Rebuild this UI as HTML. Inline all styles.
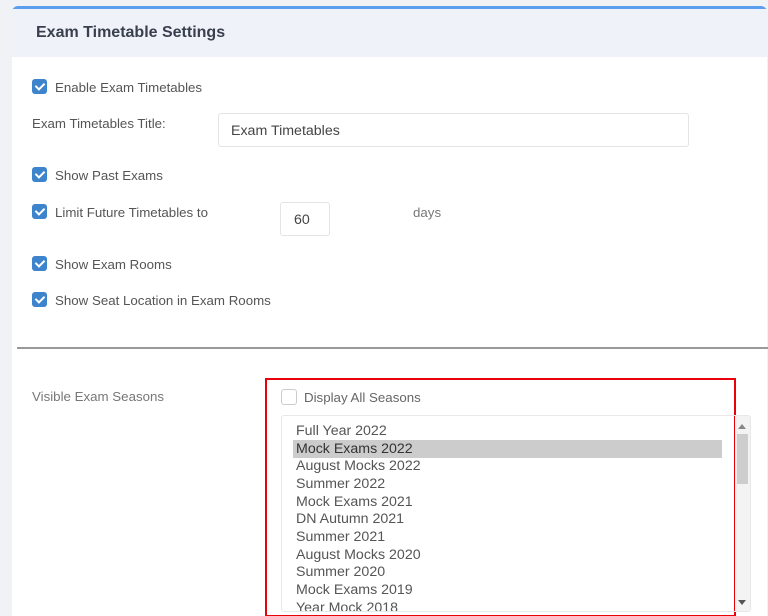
<!DOCTYPE html>
<html style="overflow:hidden"><head><style>
html,body{margin:0;width:768px;height:616px;overflow:hidden}
body{background:#f0f2f6;font-family:"Liberation Sans",sans-serif;position:relative}
.card{position:absolute;left:12px;top:6px;width:755px;height:607px;background:#fff;border-top:3px solid #5b9ef0;border-radius:6px 6px 0 0}
.hdr{position:absolute;left:12px;top:9px;width:755px;height:48px;background:#eff2f8}
.hdr span{position:absolute;left:24px;top:15px;font-size:16px;font-weight:bold;color:#3a3f4e}
.a{position:absolute;font-size:13.3px;color:#555}
.cb{position:absolute;width:15px;height:15px;border-radius:3px;background:#3d84cc}
.cb:after{content:"";position:absolute;left:4.5px;top:2px;width:4px;height:7px;border:solid #fff;border-width:0 2px 2px 0;transform:rotate(45deg)}
.inp{position:absolute;border:1px solid #e4e4e4;border-radius:3px;background:#fff;font-size:14.2px;color:#444}
.list{position:absolute;left:281px;top:415px;width:468px;height:195px;border:1px solid #e8e8e8;border-radius:3px;overflow:hidden}
.it{position:absolute;left:14px;font-size:14.2px;color:#555;line-height:17px}
</style></head><body>
<div class="card"></div>
<div class="hdr"><span>Exam Timetable Settings</span></div>
<div class="cb" style="left:32px;top:79px"></div><div class="a" style="left:55px;top:80px">Enable Exam Timetables</div>
<div class="a" style="left:32px;top:116px">Exam Timetables Title:</div>
<div class="inp" style="left:218px;top:113px;width:469px;height:32px"><span style="position:absolute;left:12px;top:9px">Exam Timetables</span></div>
<div class="cb" style="left:32px;top:167px"></div><div class="a" style="left:55px;top:168px">Show Past Exams</div>
<div class="cb" style="left:32px;top:204px"></div><div class="a" style="left:55px;top:205px">Limit Future Timetables to</div>
<div class="inp" style="left:280px;top:202px;width:48px;height:32px"><span style="position:absolute;left:13px;top:9px">60</span></div>
<div class="a" style="left:413px;top:205px;color:#777">days</div>
<div class="cb" style="left:32px;top:256px"></div><div class="a" style="left:55px;top:257px">Show Exam Rooms</div>
<div class="cb" style="left:32px;top:292px"></div><div class="a" style="left:55px;top:293px">Show Seat Location in Exam Rooms</div>
<div style="position:absolute;left:17px;top:347px;width:751px;height:2px;background:#999"></div>
<div class="a" style="left:32px;top:389px;color:#777">Visible Exam Seasons</div>
<div style="position:absolute;left:265px;top:378px;width:467px;height:235px;border:2px solid #e8000a"></div>
<div style="position:absolute;left:281px;top:389px;width:14px;height:14px;border:1px solid #ccc;border-radius:3px"></div>
<div class="a" style="left:304px;top:390px;color:#666">Display All Seasons</div>
<div class="list">
<div style="position:absolute;left:11px;top:24px;width:429px;height:18px;background:#cccccc"></div>
<div style="position:absolute;right:0;top:0;width:15px;height:195px;background:#f3f3f3"></div>
<div style="position:absolute;right:2px;top:18px;width:11px;height:50px;background:#cdcdcd"></div>
<div style="position:absolute;right:4px;top:8px;border:4px solid transparent;border-bottom:5px solid #888;border-top:0"></div>
<div style="position:absolute;right:4px;bottom:6px;border:4px solid transparent;border-top:5px solid #555;border-bottom:0"></div>
<div class="it" style="top:7px">Full Year 2022</div>
<div class="it" style="top:24.6px;color:#333">Mock Exams 2022</div>
<div class="it" style="top:42.3px">August Mocks 2022</div>
<div class="it" style="top:60px">Summer 2022</div>
<div class="it" style="top:77.6px">Mock Exams 2021</div>
<div class="it" style="top:95.2px">DN Autumn 2021</div>
<div class="it" style="top:112.9px">Summer 2021</div>
<div class="it" style="top:130.5px">August Mocks 2020</div>
<div class="it" style="top:148.2px">Summer 2020</div>
<div class="it" style="top:165.8px">Mock Exams 2019</div>
<div class="it" style="top:183.5px">Year Mock 2018</div>
</div>
</body></html>
